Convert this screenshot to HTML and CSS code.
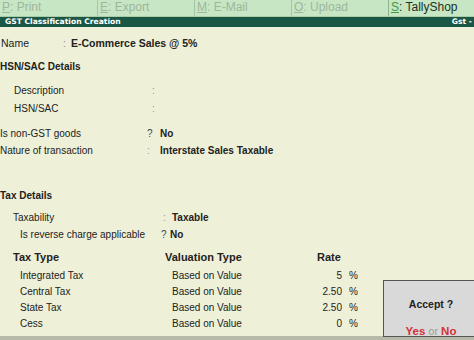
FILE: index.html
```html
<!DOCTYPE html>
<html lang="en">
<head>
    <meta charset="UTF-8">
    <title>GST Classification Creation</title>
    <link rel="stylesheet" href="styles.css">
</head>
<body>
    <div class="toolbar">
        <div class="tool"><u>P</u>: Print</div>
        <div class="tool"><u>E</u>: Export</div>
        <div class="tool"><u>M</u>: E-Mail</div>
        <div class="tool"><u>O</u>: Upload</div>
        <div class="tool on"><u>S</u>: TallyShop</div>
    </div>
    <div class="titlebar">
        <span>GST Classification Creation</span>
        <span>Gst -</span>
    </div>
    <div class="screen">
        <div class="row name-row">
            <div class="label">Name</div>
            <div class="sep">:</div>
            <div class="val">E-Commerce Sales @ 5%</div>
        </div>

        <div class="section">HSN/SAC Details</div>
        <div class="row sub">
            <div class="label">Description</div>
            <div class="sep faint">:</div>
        </div>
        <div class="row sub">
            <div class="label">HSN/SAC</div>
            <div class="sep faint">:</div>
        </div>

        <div class="row top">
            <div class="label">Is non-GST goods</div>
            <div class="sep">?</div>
            <div class="val">No</div>
        </div>
        <div class="row top">
            <div class="label">Nature of transaction</div>
            <div class="sep faint">:</div>
            <div class="val">Interstate Sales Taxable</div>
        </div>

        <div class="section tax">Tax Details</div>
        <div class="row tx">
            <div class="label">Taxability</div>
            <div class="sep faint">:</div>
            <div class="val">Taxable</div>
        </div>
        <div class="row tx rc">
            <div class="label">Is reverse charge applicable</div>
            <div class="sep">?</div>
            <div class="val">No</div>
        </div>

        <div class="table">
            <div class="trow head">
                <div class="c1">Tax Type</div>
                <div class="c2">Valuation Type</div>
                <div class="c3">Rate</div>
            </div>
            <div class="trow">
                <div class="c1">Integrated Tax</div>
                <div class="c2">Based on Value</div>
                <div class="c3"><span class="num">5</span><span>%</span></div>
            </div>
            <div class="trow">
                <div class="c1">Central Tax</div>
                <div class="c2">Based on Value</div>
                <div class="c3"><span class="num">2.50</span><span>%</span></div>
            </div>
            <div class="trow">
                <div class="c1">State Tax</div>
                <div class="c2">Based on Value</div>
                <div class="c3"><span class="num">2.50</span><span>%</span></div>
            </div>
            <div class="trow">
                <div class="c1">Cess</div>
                <div class="c2">Based on Value</div>
                <div class="c3"><span class="num">0</span><span>%</span></div>
            </div>
        </div>
    </div>
    <div class="footer"></div>

    <div class="accept">
        <div class="q">Accept ?</div>
        <div class="ans"><b>Yes</b> <span>or</span> <b>No</b></div>
    </div>
</body>
</html>
```

FILE: styles.css
```css
html, body{
    margin: 0;
    padding: 0;
    font-family: "Liberation Sans", Arial, sans-serif;
    font-size: 10px;
    color: #222;
    background: #eff0d8;
}
body{
    width: 474px;
    height: 340px;
    overflow: hidden;
    position: relative;
}
.toolbar{
    display: flex;
    height: 16px;
    background: #c6e6c4;
    border-bottom: 1px solid #a9cca7;
}
.tool{
    width: 97px;
    flex: none;
    box-sizing: border-box;
    padding-left: 2px;
    border-left: 1px solid #a4c6a2;
    font-size: 12px;
    line-height: 15px;
    color: #9db79b;
}
.tool:first-child{
    border-left: none;
}
.tool.on{
    color: #1c3324;
    border-left: 1px solid #8fb58d;
}
.tool.on u{
    color: #3f9a45;
}
.titlebar{
    display: flex;
    justify-content: space-between;
    height: 10px;
    line-height: 10px;
    padding: 0 2px 0 5px;
    background: #1a5744;
    color: #fff;
    font-family: "DejaVu Sans", sans-serif;
    font-weight: bold;
    font-size: 7.6px;
}
.screen{
    padding-top: 7px;
}
.row{
    display: flex;
    height: 17px;
    line-height: 17px;
}
.label{
    width: 64px;
    flex: none;
}
.sep{
    width: 8px;
    flex: none;
    color: #444;
}
.sep.faint{
    color: #999;
}
.val{
    font-weight: bold;
}
.name-row{
    height: 18px;
    line-height: 18px;
    padding-left: 1px;
    font-size: 10.5px;
}
.name-row .label{
    width: 62px;
}
.name-row .sep{
    width: 8px;
    color: #888;
}
.section{
    margin-top: 6px;
    height: 17px;
    line-height: 17px;
    font-weight: bold;
}
.section.tax{
    margin-top: 28px;
}
.row.sub{
    padding-left: 14px;
}
.section + .row.sub{
    margin-top: 7px;
}
.row.sub + .row.sub{
    margin-top: 1px;
}
.row.sub .label{
    width: 138px;
}
.row.sub + .row.top{
    margin-top: 8px;
}
.row.top .label{
    width: 147px;
}
.row.top .sep{
    width: 13px;
}
.row.tx{
    padding-left: 13px;
}
.row.tx .label{
    width: 150px;
}
.row.tx .sep{
    width: 9px;
}
.row.rc{
    padding-left: 20px;
}
.row.rc .label{
    width: 141px;
}
.section + .row.tx{
    margin-top: 5px;
}
.table{
    margin-top: 6px;
}
.trow{
    display: flex;
    height: 16px;
    line-height: 16px;
}
.trow.head{
    height: 19px;
    line-height: 17px;
    font-weight: bold;
    font-size: 11px;
}
.c1{
    width: 152px;
    flex: none;
    padding-left: 20px;
}
.c2{
    width: 145px;
    flex: none;
}
.c3{
    display: flex;
    width: 60px;
}
.trow.head .c1{
    width: 152px;
    padding-left: 13px;
}
.trow.head .c2{
    width: 152px;
}
.c3 .num{
    width: 25px;
    text-align: right;
    margin-right: 7px;
}
.footer{
    position: absolute;
    left: 0;
    right: 0;
    bottom: 0;
    height: 4px;
    background: #b7b9a9;
}
.accept{
    position: absolute;
    left: 383px;
    top: 280px;
    width: 95px;
    height: 57px;
    box-sizing: border-box;
    background: #d9d9d9;
    border: 1px solid #555;
    border-right: none;
    text-align: center;
}
.accept .q{
    margin-top: 17px;
    font-weight: bold;
    font-size: 10.5px;
    color: #222;
}
.accept .ans{
    margin-top: 15px;
    font-size: 11.5px;
}
.accept .ans b{
    color: #d3313b;
}
.accept .ans span{
    color: #999;
    font-size: 10.5px;
}
```
